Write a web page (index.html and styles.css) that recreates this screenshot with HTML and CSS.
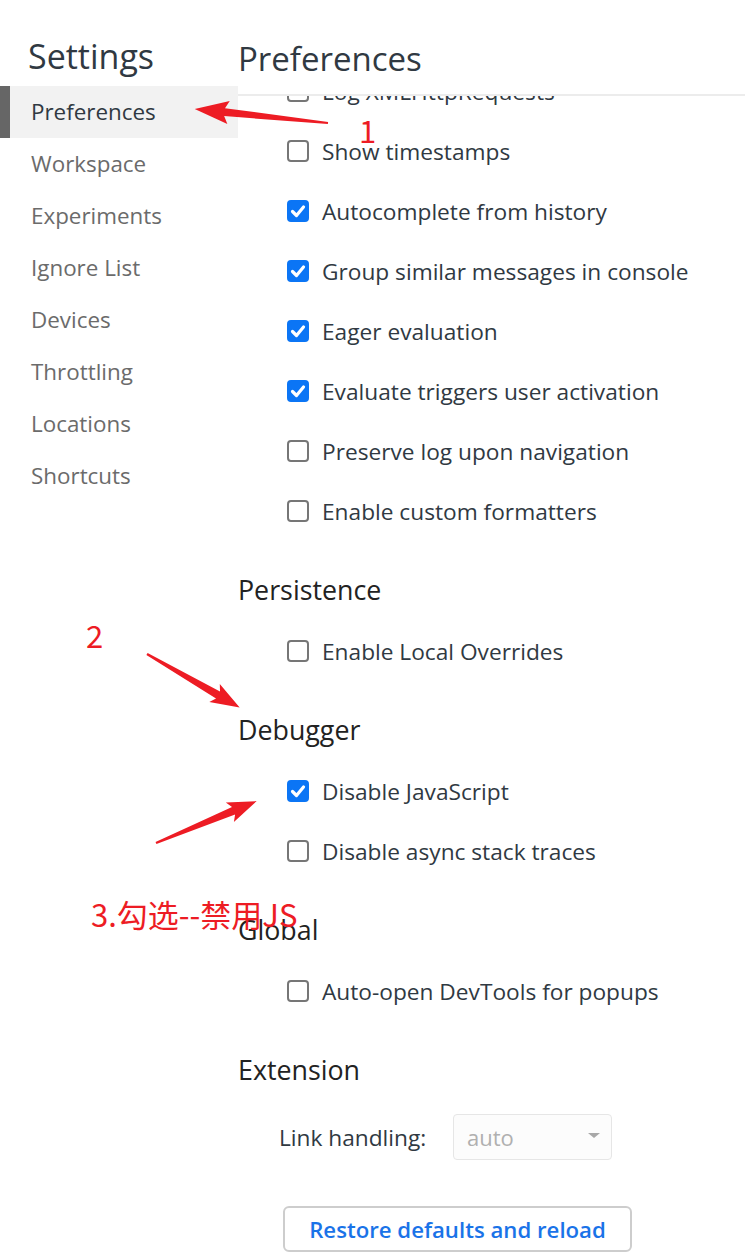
FILE: index.html
```html
<!DOCTYPE html>
<html lang="en">
<head>
<meta charset="utf-8">
<title>Settings</title>
<link rel="stylesheet" href="styles.css">
</head>
<body>
<div class="page">
  <aside class="sidebar">
    <div class="side-title">Settings</div>
    <nav class="nav">
      <div class="nav-item selected">Preferences</div>
      <div class="nav-item">Workspace</div>
      <div class="nav-item">Experiments</div>
      <div class="nav-item">Ignore List</div>
      <div class="nav-item">Devices</div>
      <div class="nav-item">Throttling</div>
      <div class="nav-item">Locations</div>
      <div class="nav-item">Shortcuts</div>
    </nav>
  </aside>
  <main class="main">
    <header class="main-head"><h1 class="main-title">Preferences</h1></header>
    <div class="scroller">
      <div class="content">
        <div class="row first"><span class="cb"></span><span class="label">Log XMLHttpRequests</span></div>
        <div class="row"><span class="cb"></span><span class="label">Show timestamps</span></div>
        <div class="row"><span class="cb on"><svg viewBox="0 0 22 22"><path d="M5.5 11.5 L9.5 15.5 L16.5 7"/></svg></span><span class="label">Autocomplete from history</span></div>
        <div class="row"><span class="cb on"><svg viewBox="0 0 22 22"><path d="M5.5 11.5 L9.5 15.5 L16.5 7"/></svg></span><span class="label">Group similar messages in console</span></div>
        <div class="row"><span class="cb on"><svg viewBox="0 0 22 22"><path d="M5.5 11.5 L9.5 15.5 L16.5 7"/></svg></span><span class="label">Eager evaluation</span></div>
        <div class="row"><span class="cb on"><svg viewBox="0 0 22 22"><path d="M5.5 11.5 L9.5 15.5 L16.5 7"/></svg></span><span class="label">Evaluate triggers user activation</span></div>
        <div class="row"><span class="cb"></span><span class="label">Preserve log upon navigation</span></div>
        <div class="row"><span class="cb"></span><span class="label">Enable custom formatters</span></div>

        <h2 class="section">Persistence</h2>
        <div class="row"><span class="cb"></span><span class="label">Enable Local Overrides</span></div>

        <h2 class="section">Debugger</h2>
        <div class="row"><span class="cb on"><svg viewBox="0 0 22 22"><path d="M5.5 11.5 L9.5 15.5 L16.5 7"/></svg></span><span class="label">Disable JavaScript</span></div>
        <div class="row"><span class="cb"></span><span class="label">Disable async stack traces</span></div>

        <h2 class="section">Global</h2>
        <div class="row"><span class="cb"></span><span class="label">Auto-open DevTools for popups</span></div>

        <h2 class="section">Extension</h2>
        <div class="select-row">
          <span class="select-label">Link handling:</span>
          <div class="select"><span class="select-value">auto</span><span class="select-arrow"></span></div>
        </div>
        <div class="btn-row"><button class="btn">Restore defaults and reload</button></div>
      </div>
    </div>
  </main>
</div>

<svg class="annot" width="745" height="1253" viewBox="0 0 745 1253">
  <g fill="#ed1c24">
    <polygon transform="translate(328 123) rotate(186)" points="0,-1 104,-4 100,-11.5 134,0 100,11.5 104,4 0,1"/>
    <polygon transform="translate(147 654) rotate(30)" points="0,-1.2 82,-4 78,-10.5 107,0 78,10.5 82,4 0,1.2"/>
    <polygon transform="translate(156 843) rotate(-22.6)" points="0,-1.2 84,-4 80,-10.5 109,0 80,10.5 84,4 0,1.2"/>
  </g>
</svg>
<div class="note n1">1</div>
<div class="note n2">2</div>
<div class="note n3">3.勾选--禁用JS</div>
</body>
</html>
```

FILE: styles.css
```css
* { box-sizing: border-box; }
html, body { margin: 0; padding: 0; background: #fff; }
body {
  width: 745px;
  height: 1253px;
  overflow: hidden;
  position: relative;
  font-family: "Open Sans", "Noto Sans", sans-serif;
  color: #303942;
}
.page { display: flex; height: 1253px; }
.sidebar { width: 238px; flex: none; }
.side-title {
  padding: 36px 0 0 28px;
  height: 86px;
  line-height: 40px;
  font-size: 34px;
  color: #303942;
}
.nav { display: flex; flex-direction: column; }
.nav-item {
  height: 52px;
  line-height: 52px;
  padding-left: 31px;
  font-size: 22.4px;
  color: #6b6b6b;
}
.nav-item.selected {
  background: #f2f2f2;
  color: #303942;
  border-left: 10px solid #666;
  padding-left: 21px;
}
.main { flex: 1; display: flex; flex-direction: column; min-width: 0; }
.main-head { height: 96px; border-bottom: 2px solid #ececec; }
.main-title {
  margin: 0;
  padding: 39px 0 0 0;
  line-height: 40px;
  font-size: 33px;
  font-weight: 400;
  color: #303942;
}
.scroller { flex: 1; overflow: hidden; }
.content { display: flex; flex-direction: column; }
.row {
  height: 60px;
  display: flex;
  align-items: center;
  padding-left: 49px;
  gap: 13px;
}
.row.first { margin-top: -35px; }
.cb {
  width: 22px;
  height: 22px;
  border: 2px solid #767676;
  border-radius: 4px;
  flex: none;
  display: flex;
}
.cb.on { background: #0b75f5; border-color: #0b75f5; }
.cb svg { width: 22px; height: 22px; margin: -2px; }
.cb path { fill: none; stroke: #fff; stroke-width: 3.2; stroke-linecap: round; stroke-linejoin: round; }
.label { font-size: 22.7px; color: #303942; white-space: nowrap; }
.section {
  margin: 18px 0 0 0;
  height: 62px;
  line-height: 62px;
  padding-left: 0;
  font-size: 26.8px;
  font-weight: 400;
  color: #222;
}
.select-row {
  height: 72px;
  display: flex;
  align-items: center;
  padding-left: 41px;
}
.select-label { font-size: 22.7px; color: #303942; width: 174px; flex: none; }
.select {
  width: 159px;
  height: 46px;
  border: 1.5px solid #e6e6e6;
  border-radius: 4px;
  background: #fcfcfc;
  display: flex;
  align-items: center;
  justify-content: space-between;
  padding: 0 11px 0 13px;
}
.select-value { font-size: 22px; color: #b0b0b0; }
.select-arrow {
  width: 0; height: 0;
  border-left: 6px solid transparent;
  border-right: 6px solid transparent;
  border-top: 5px solid #a8a8a8;
  margin-top: -3px;
}
.btn-row { padding: 33px 0 0 45px; }
.btn {
  width: 349px;
  height: 46px;
  border: 2px solid #cdcdcd;
  border-radius: 6px;
  background: #fff;
  font-family: "Open Sans", "Noto Sans", sans-serif;
  font-size: 22.2px;
  font-weight: 600;
  color: #1a73e8;
  padding: 0;
}
.annot { position: absolute; left: 0; top: 0; pointer-events: none; }
.note {
  position: absolute;
  color: #ed1c24;
  font-family: "Microsoft YaHei", "Noto Sans CJK SC", sans-serif;
  font-size: 31px;
  line-height: 1;
  white-space: nowrap;
}
.n1 { left: 359px; top: 114px; }
.n2 { left: 86px; top: 619px; }
.n3 { left: 91px; top: 898px; }
```
